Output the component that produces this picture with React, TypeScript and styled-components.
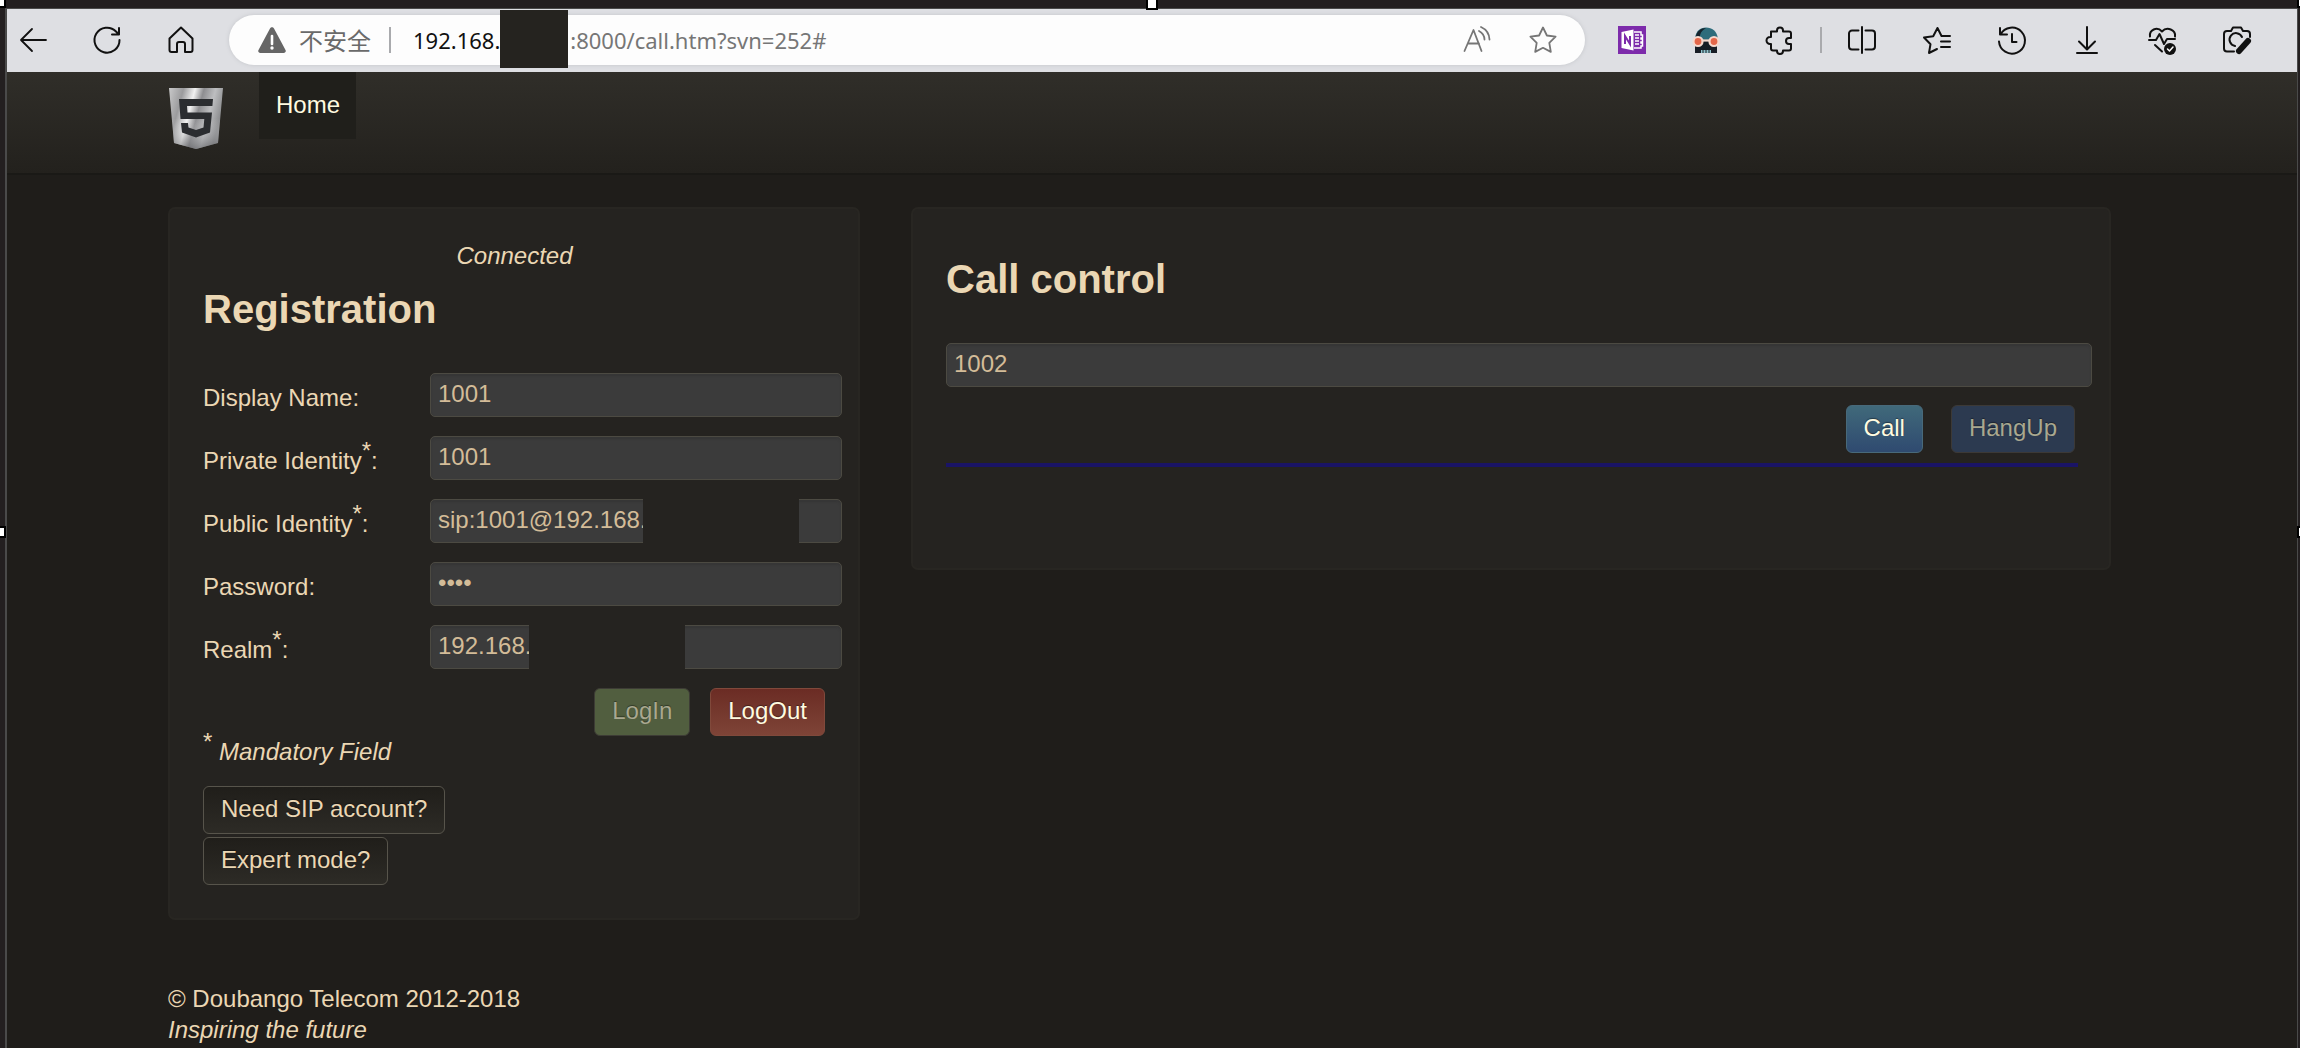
import React, { useState } from "react";
import styled, { createGlobalStyle, css } from "styled-components";

const GlobalStyle = createGlobalStyle`
  *, *::before, *::after { box-sizing: border-box; }
  html, body, #root { height: 100%; }
  body {
    margin: 0;
    background: #231f20;
    color: #ebd7b4;
    font: 24px/32px "Liberation Sans", Arial, sans-serif;
  }
  button, input { font: inherit; }
`;

const Window = styled.div`
  position: relative;
  display: flex;
  flex-direction: column;
  min-height: 100%;
  overflow: hidden;
  padding: 8px 2px 0 5px;
`;

const Frame = styled.div`
  flex: 1;
  display: flex;
  flex-direction: column;
  border: solid #4a4a4a;
  border-width: 1px 1px 0 2px;
  background: #1f1d1a;
`;

const Handle = styled.span<{ $side: "corner" | "top" | "left" | "right" | "cornerRight" }>`
  position: absolute;
  width: 12px;
  height: 12px;
  border: 2px solid #000;
  background: #fff;
  ${(p) => p.$side === "corner" && css`top: -4px; left: -6px;`}
  ${(p) => p.$side === "cornerRight" && css`top: -4px; right: -9px;`}
  ${(p) => p.$side === "top" && css`top: -2px; left: calc(50% - 4px);`}
  ${(p) => p.$side === "left" && css`top: 526px; left: -6px;`}
  ${(p) => p.$side === "right" && css`top: 526px; right: -9px;`}
`;

const Toolbar = styled.header`
  display: flex;
  align-items: center;
  height: 63px;
  padding: 0 46px 2px 12px;
  background: #dedfe3;
  color: #111;
`;

const IconGroup = styled.div<{ $gap: number }>`
  display: flex;
  align-items: center;
  gap: ${(p) => p.$gap}px;
`;

const IconButton = styled.button`
  display: flex;
  width: 28px;
  height: 28px;
  padding: 0;
  border: 0;
  background: none;
  color: inherit;

  svg { width: 28px; height: 28px; overflow: visible; }
`;

const Address = styled.div`
  flex: 1;
  display: flex;
  align-items: center;
  height: 50px;
  margin: 0 33px 0 34px;
  padding: 0 28px 0 29px;
  border-radius: 25px;
  background: #fdfdfd;
  box-shadow: 0 0 4px #c4c6ca;
  color: #767676;
  font: 22px/32px "Noto Sans", "Noto Sans CJK SC", sans-serif;
`;

const Security = styled.span`
  margin-left: 13px;
  font-size: 24px;
  font-family: "Noto Sans CJK SC", sans-serif;
  color: #6a6a6a;
`;

const Rule = styled.span<{ $margin: string }>`
  width: 2px;
  height: 26px;
  margin: ${(p) => p.$margin};
  background: #a9aaad;
`;

const Url = styled.div`
  flex: 1;
  display: flex;
  align-items: center;
  white-space: nowrap;
`;

const Host = styled.span`
  color: #111;
`;

const Redacted = styled.span`
  width: 68px;
  height: 58px;
  margin: 0 2px 2px 0;
  background: #25231f;
`;

const NavBar = styled.nav`
  display: flex;
  align-items: flex-start;
  height: 103px;
  padding-left: 161px;
  border-bottom: 2px solid #1a1916;
  background: linear-gradient(#302e29, #23211d);
`;

const Brand = styled.a`
  display: flex;
  padding-top: 15px;
  svg { width: 56px; height: 64px; }
`;

const NavLink = styled.a`
  margin-left: 35px;
  padding: 17px 16px 18px 17px;
  background: #201f1b;
  color: #fffbe0;
  text-decoration: none;
`;

const Content = styled.main`
  padding: 32px 186px 0 161px;
`;

const Panels = styled.div`
  display: grid;
  grid-template-columns: 692fr 1200fr;
  align-items: start;
  gap: 51px;
`;

const Panel = styled.section<{ $pad: string }>`
  padding: ${(p) => p.$pad};
  border: 2px solid #282622;
  border-radius: 7px;
  background: #252320;
`;

const Status = styled.p`
  margin: 0 16px 7px 0;
  text-align: center;
  font-style: italic;
`;

const Title = styled.h2`
  margin: 0 0 34px;
  font-size: 40px;
  line-height: 60px;
`;

const Row = styled.div`
  display: grid;
  grid-template-columns: 227px 1fr;
  height: 44px;
  margin-bottom: 19px;
`;

const Label = styled.label`
  padding-top: 9px;
`;

const Star = styled.sup`
  position: relative;
  top: -10px;
  vertical-align: baseline;
  font-size: 24px;
  line-height: 0;
`;

const InputWrap = styled.div`
  position: relative;
  display: flex;
`;

const Input = styled.input`
  display: block;
  width: 100%;
  height: 44px;
  padding: 0 7px 2px;
  border: 1px solid #4c4a42;
  border-radius: 5px;
  background: #3b3b3b;
  box-shadow: inset 0 2px 2px #363636;
  color: #d3bc98;
  outline: none;
`;

const Mask = styled.span<{ $left: number }>`
  position: absolute;
  top: 0;
  bottom: 0;
  left: ${(p) => p.$left}px;
  width: 156px;
  background: #252320;
`;

const Actions = styled.div<{ $gap: number }>`
  display: flex;
  justify-content: flex-end;
  gap: ${(p) => p.$gap}px;
  padding-right: 17px;
`;

const tones = {
  green: css`background: #515e3f; border-color: #3d3c35; color: #a9a890;`,
  red: css`background: linear-gradient(#6b2c24, #7e4437); border-color: #80493b; color: #fffbe0;`,
  teal: css`background: linear-gradient(#40697a, #2f4a70); border-color: #48697a; color: #fffbe0;`,
  navy: css`background: #2c3a50; border-color: #3c3936; color: #a9a890;`,
  plain: css`background: linear-gradient(#201e1a, #2d2b26); border-color: #57544b; color: #ebd7b4;`,
};

const Button = styled.button<{ $tone: keyof typeof tones }>`
  height: 48px;
  padding: 0 17px 2px;
  border: 1px solid;
  border-radius: 6px;
  text-shadow: 0 -1px 1px rgba(0, 0, 0, 0.4);
  ${(p) => tones[p.$tone]}
`;

const Mandatory = styled.p`
  margin: 0 0 18px;
`;

const Extras = styled.div`
  display: flex;
  flex-direction: column;
  align-items: flex-start;
  gap: 3px;
`;

const CallForm = styled.form`
  display: flex;
  flex-direction: column;
  gap: 18px;
`;

const Divider = styled.hr`
  height: 4px;
  margin: 10px 14px 0 0;
  border: 0;
  background: #1a1466;
`;

const Footer = styled.footer`
  padding: 63px 0 2px;
  line-height: 31px;
  p { margin: 0; }
`;

type IconProps = { children: React.ReactNode; width?: number };
const Icon = ({ children, width = 2 }: IconProps) => (
  <svg viewBox="0 0 28 28" fill="none" stroke="currentColor" strokeWidth={width} strokeLinecap="round" strokeLinejoin="round" aria-hidden="true">
    {children}
  </svg>
);

const BackIcon = () => <Icon><path d="M27 14H2M13 3 2 14l11 11" strokeWidth="1.8" /></Icon>;
const ReloadIcon = () => <Icon><path d="M26.5 14A12.5 12.5 0 1 1 23 5.5l3 3M26 2v6.500h-7" /></Icon>;
const HomeIcon = () => <Icon><path d="M2.500 12.500 14 1.500l11.500 11V24a2 2 0 0 1-2 2H18v-8a2 2 0 0 0-2-2h-4a2 2 0 0 0-2 2v8H4.500a2 2 0 0 1-2-2z" /></Icon>;
const WarningIcon = () => (
  <svg width="28" height="28" viewBox="0 0 28 28" aria-hidden="true">
    <path d="M12 2.500c.9-1.700 3.100-1.700 4 0L27.500 24c.8 1.500-.2 3-1.800 3H2.300C.7 27-.3 25.500.5 24z" fill="#666" />
    <path d="M14 10v8" stroke="#fff" strokeWidth="2.600" strokeLinecap="round" />
    <circle cx="14" cy="22" r="1.700" fill="#fff" />
  </svg>
);
const ReadAloudIcon = () => <Icon width={1.8}><path d="M1.500 25 10.500 4l8 21M5 17.500h11M16 5a10 10 0 0 1 5.500 8.500M18 1a14.500 14.500 0 0 1 8.500 12.500" /></Icon>;
const StarIcon = () => <Icon width={1.8}><path d="m14 1.500 3.900 8 8.700 1.200-6.300 6.200 1.500 9L14 21.800l-7.800 4.100 1.500-9L1.400 10.700l8.700-1.200z" /></Icon>;
const NotesIcon = () => (
  <svg viewBox="0 0 28 28" aria-hidden="true">
    <path d="M0 0h28v28H0z" fill="#7d2bab" />
    <path d="M16 6h7v3h1.500v3H23v1h1.500v3H23v1h1.500v3H23v2h-7" fill="none" stroke="#fff" strokeWidth="1.500" />
    <path d="M17 9h4M17 12h4M17 15h4M17 18h4" stroke="#fff" strokeWidth="1.500" />
    <path d="M3.500 6 15.500 3.500v21L3.500 22z" fill="#fff" />
    <path d="M7 18v-8l5 8v-8" fill="none" stroke="#7d2bab" strokeWidth="2" />
  </svg>
);
const SkullIcon = () => (
  <svg viewBox="0 0 28 28" aria-hidden="true">
    <path d="M3 12C4 5 8 1.500 14 1.500S25 5 26 13v4H3z" fill="#2e6c7b" />
    <path d="M4 10C5 5 9 2 14 2 9 5 8 8 8 11z" fill="#16242d" />
    <path d="M3 16c5-3 17-3 22 0v11H3z" fill="#171d25" />
    <path d="M9 24h10v3H9z" fill="#8fc3cc" />
    <path d="M11 23v4M14 23v4M17 23v4" stroke="#171d25" />
    <circle cx="6" cy="15.500" r="4.500" fill="#e4674a" stroke="#f6d9ce" strokeWidth="2.200" />
    <circle cx="22" cy="15.500" r="4.500" fill="#e4674a" stroke="#f6d9ce" strokeWidth="2.200" />
    <path d="M10.500 14.500h7" stroke="#f6d9ce" strokeWidth="2.200" />
  </svg>
);
const PuzzleIcon = () => <Icon><path d="M5 5.500h6v-1a3 3 0 0 1 6 0v1h6a2 2 0 0 1 2 2V12h-2a3 3 0 0 0 0 6h2v4.500a2 2 0 0 1-2 2h-6v.5a3 3 0 0 1-6 0v-.5H7a2 2 0 0 1-2-2V18H4a3.500 3.500 0 0 1 0-7h1z" /></Icon>;
const SplitIcon = () => <Icon><path d="M14 1v26M10.500 4.500H4a3 3 0 0 0-3 3v13a3 3 0 0 0 3 3h6.500M17.500 4.500H24a3 3 0 0 1 3 3v13a3 3 0 0 1-3 3h-6.500" /></Icon>;
const FavoritesIcon = () => <Icon><path d="M27 10h-8.500l-4-8-4.300 8.300L1 11.500l6.500 6.700L6 27l8-4M18 15.500h9M18 21h9" /></Icon>;
const HistoryIcon = () => <Icon><path d="M2 2v6.500h7M2.500 8.500A13 13 0 1 1 1 15.500M14 8v8h4.500" /></Icon>;
const DownloadIcon = () => <Icon><path d="M14 1v22M6 15.500l8 8 8-8M4 27h20" /></Icon>;
const HealthIcon = () => (
  <Icon>
    <path d="M2 10.500C1 4 9 0 14 5.500 19 0 28 4 27 10.500M1 14h7l3.500-6 4.500 10 3-5h8M7 19l7 6.500" />
    <circle cx="22" cy="23" r="6" fill="currentColor" stroke="none" />
    <path d="m19.500 23 2 2 3.500-4" stroke="#fff" strokeWidth="1.500" />
  </Icon>
);
const CameraIcon = () => (
  <Icon>
    <path d="M11 25.500H4a3 3 0 0 1-3-3V8a3 3 0 0 1 3-3h4l2-3.500h8L20 5h4a3 3 0 0 1 3 3v3M19 11a6.500 6.500 0 1 0-7 9" />
    <path d="M25 15 16 25" strokeWidth="6" />
  </Icon>
);

const ShieldLogo = () => (
  <svg viewBox="0 0 56 64" role="img" aria-label="HTML5">
    <defs>
      <linearGradient id="metal" x1="0" y1="0" x2="1" y2="0.300">
        <stop offset="0" stopColor="#c9c9ca" />
        <stop offset="0.250" stopColor="#9b9b9d" />
        <stop offset="0.450" stopColor="#f1f1f1" />
        <stop offset="0.600" stopColor="#8d8d90" />
        <stop offset="0.800" stopColor="#bdbec0" />
        <stop offset="1" stopColor="#8c8d8f" />
      </linearGradient>
      <linearGradient id="shade" x1="0" y1="0" x2="0" y2="1">
        <stop offset="0.500" stopColor="#fff" stopOpacity="0" />
        <stop offset="1" stopColor="#55565a" stopOpacity="0.550" />
      </linearGradient>
    </defs>
    <path d="M1 1h54l-5 55-22 6-22-6z" fill="url(#metal)" />
    <path d="M1 1h54l-5 55-22 6-22-6z" fill="url(#shade)" />
    <path d="M11 12h34l-.6 7H19l.5 6.500H44L42 45.500 28 50.500 14 45.500 13 36h7l.5 4.500 7.500 2.500 7.500-2.500.8-8.500H12.500z" fill="#2b2d30" />
  </svg>
);

type Field = { id: string; label: string; required?: boolean; value: string; type?: string; mask?: number };
const fields: Field[] = [
  { id: "display", label: "Display Name", value: "1001" },
  { id: "private", label: "Private Identity", required: true, value: "1001" },
  { id: "public", label: "Public Identity", required: true, value: "sip:1001@192.168.", mask: 213 },
  { id: "password", label: "Password", value: "1001", type: "password" },
  { id: "realm", label: "Realm", required: true, value: "192.168.", mask: 99 },
];

const FieldRow = ({ field }: { field: Field }) => {
  const [value, setValue] = useState(field.value);
  return (
    <Row>
      <Label htmlFor={field.id}>
        {field.label}
        {field.required && <Star>*</Star>}:
      </Label>
      <InputWrap>
        <Input id={field.id} type={field.type ?? "text"} value={value} onChange={(e) => setValue(e.target.value)} />
        {field.mask !== undefined && <Mask $left={field.mask} />}
      </InputWrap>
    </Row>
  );
};

export default function App() {
  const [number, setNumber] = useState("1002");
  return (
    <Window>
      <GlobalStyle />
      <Frame>
        <Toolbar>
          <IconGroup $gap={46}>
            <IconButton aria-label="Back"><BackIcon /></IconButton>
            <IconButton aria-label="Refresh"><ReloadIcon /></IconButton>
            <IconButton aria-label="Home page"><HomeIcon /></IconButton>
          </IconGroup>
          <Address>
            <WarningIcon />
            <Security>不安全</Security>
            <Rule $margin="0 22px 0 18px" />
            <Url>
              <Host>192.168.</Host>
              <Redacted />
              <span>:8000/call.htm?svn=252#</span>
            </Url>
            <IconGroup $gap={38}>
              <IconButton aria-label="Read aloud"><ReadAloudIcon /></IconButton>
              <IconButton aria-label="Add to favorites"><StarIcon /></IconButton>
            </IconGroup>
          </Address>
          <IconGroup $gap={46}>
            <IconButton aria-label="Notes"><NotesIcon /></IconButton>
            <IconButton aria-label="Profile extension"><SkullIcon /></IconButton>
            <IconButton aria-label="Extensions"><PuzzleIcon /></IconButton>
          </IconGroup>
          <Rule $margin="0 26px" />
          <IconGroup $gap={47}>
            <IconButton aria-label="Split screen"><SplitIcon /></IconButton>
            <IconButton aria-label="Favorites"><FavoritesIcon /></IconButton>
            <IconButton aria-label="History"><HistoryIcon /></IconButton>
            <IconButton aria-label="Downloads"><DownloadIcon /></IconButton>
            <IconButton aria-label="Browser essentials"><HealthIcon /></IconButton>
            <IconButton aria-label="Screenshot"><CameraIcon /></IconButton>
          </IconGroup>
        </Toolbar>
        <NavBar>
          <Brand href="#"><ShieldLogo /></Brand>
          <NavLink href="#">Home</NavLink>
        </NavBar>
        <Content>
          <Panels>
            <Panel $pad="31px 16px 33px 33px">
              <Status>Connected</Status>
              <Title>Registration</Title>
              <form onSubmit={(e) => e.preventDefault()}>
                {fields.map((f) => <FieldRow key={f.id} field={f} />)}
                <Actions $gap={20}>
                  <Button $tone="green" type="button" disabled>LogIn</Button>
                  <Button $tone="red" type="button">LogOut</Button>
                </Actions>
              </form>
              <Mandatory><Star>*</Star> <i>Mandatory Field</i></Mandatory>
              <Extras>
                <Button $tone="plain" type="button">Need SIP account?</Button>
                <Button $tone="plain" type="button">Expert mode?</Button>
              </Extras>
            </Panel>
            <Panel $pad="40px 17px 101px 33px">
              <Title>Call control</Title>
              <CallForm onSubmit={(e) => e.preventDefault()}>
                <Input aria-label="Phone number" value={number} onChange={(e) => setNumber(e.target.value)} />
                <Actions $gap={28}>
                  <Button $tone="teal" type="button">Call</Button>
                  <Button $tone="navy" type="button" disabled>HangUp</Button>
                </Actions>
              </CallForm>
              <Divider />
            </Panel>
          </Panels>
          <Footer>
            <p>© Doubango Telecom 2012-2018</p>
            <p><i>Inspiring the future</i></p>
          </Footer>
        </Content>
      </Frame>
      <Handle $side="corner" />
      <Handle $side="top" />
      <Handle $side="cornerRight" />
      <Handle $side="left" />
      <Handle $side="right" />
    </Window>
  );
}
